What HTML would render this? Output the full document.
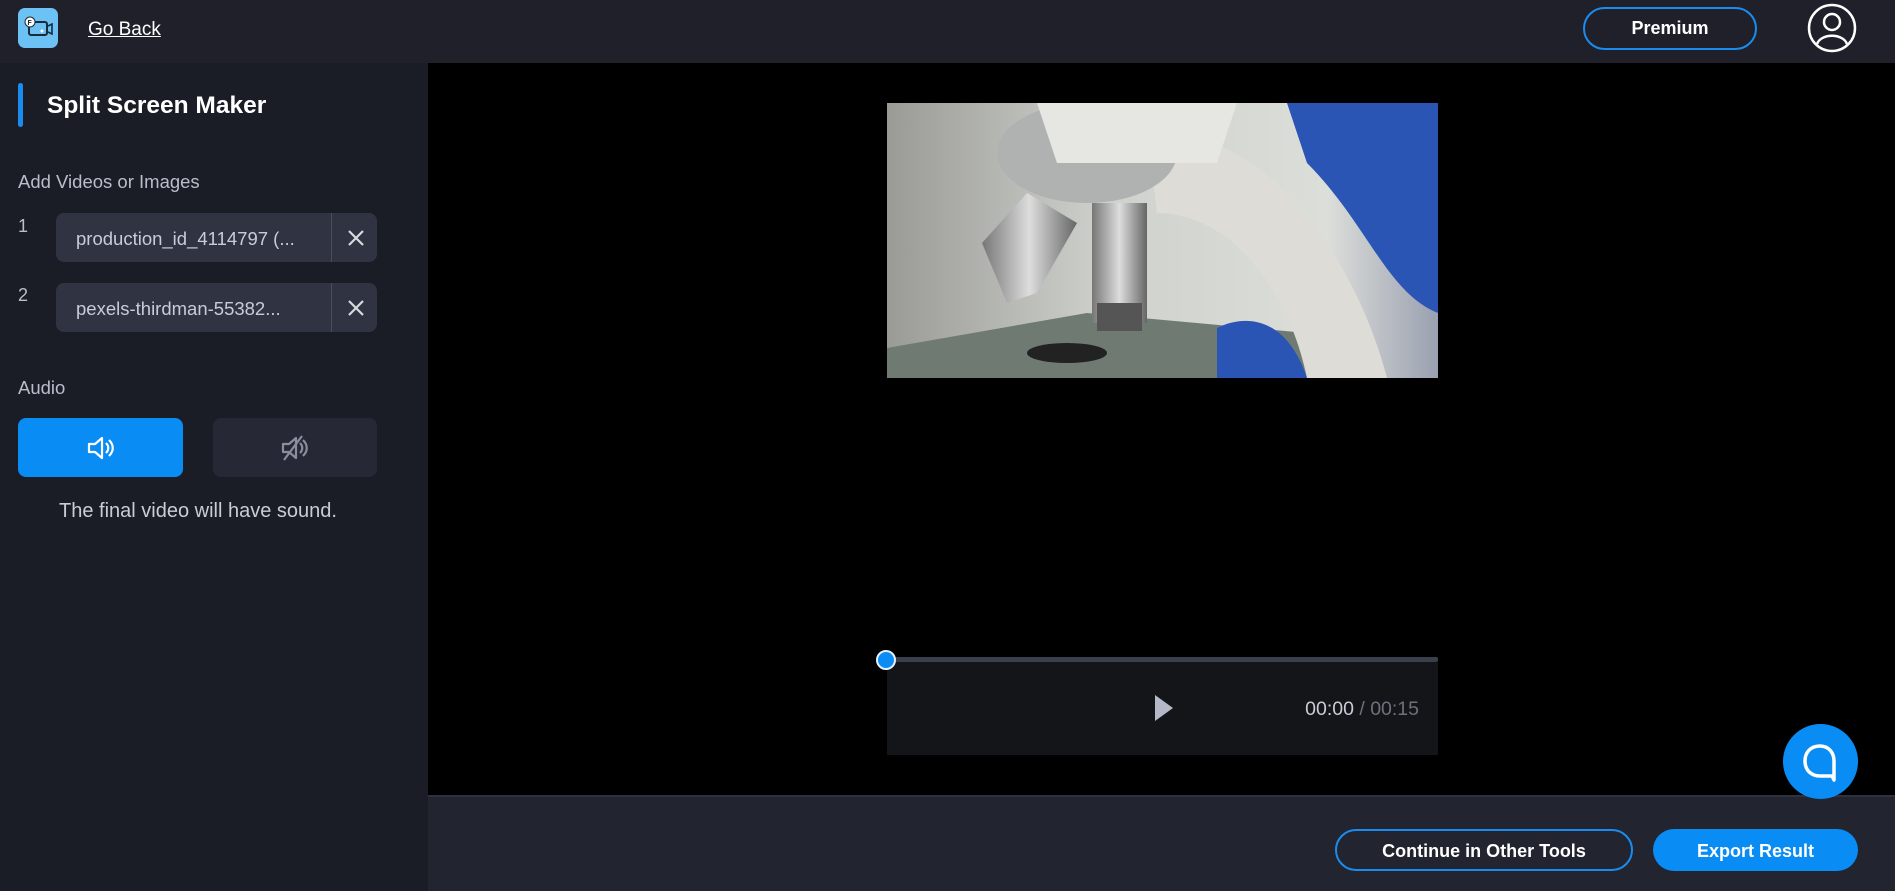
<!DOCTYPE html>
<html><head><meta charset="utf-8"><style>
*{margin:0;padding:0;box-sizing:border-box}
body{width:1895px;height:891px;overflow:hidden;background:#000;font-family:"Liberation Sans",sans-serif;position:relative}
.abs{position:absolute}
#hdr{left:0;top:0;width:1895px;height:63px;background:#1f2029}
#side{left:0;top:63px;width:428px;height:828px;background:#1b1d26}
#bot{left:428px;top:795px;width:1467px;height:96px;background:#22252f;border-top:2px solid #2e323e}
.item{background:#303341;border-radius:8px;height:49px;width:321px;left:56px}
.item span{position:absolute;left:20px;top:15px;color:#c9ccd8;font-size:18.5px}
.item i{position:absolute;left:275px;top:0;width:1px;height:49px;background:#4a4e5c}
.num{left:18px;color:#b9bdcc;font-size:18px}
</style></head><body>
<div id="hdr" class="abs"></div>
<div class="abs" style="left:18px;top:8px;width:40px;height:40px;border-radius:7px;background:#6cc2f5"></div>
<svg class="abs" style="left:18px;top:8px" width="40" height="40" viewBox="0 0 40 40"><rect x="11" y="14" width="18" height="13" rx="2" fill="none" stroke="#1b2b3a" stroke-width="2"/><path d="M30 18 L34 16 V26 L30 24" fill="none" stroke="#1b2b3a" stroke-width="1.6"/><circle cx="12" cy="14" r="5" fill="#fff" stroke="#1b2b3a" stroke-width="1"/><text x="9.5" y="17" font-size="7" font-family="Liberation Sans" font-weight="bold" fill="#1b2b3a">F</text><circle cx="24" cy="23" r="1.5" fill="#fff"/></svg>
<div class="abs" style="left:88px;top:19px;color:#fff;font-size:19px;text-decoration:underline">Go Back</div>
<div class="abs" style="left:1583px;top:7px;width:174px;height:43px;border:2px solid #1a8cf0;border-radius:22px;color:#fff;font-size:18px;text-align:center;line-height:39px;font-weight:bold">Premium</div>
<svg class="abs" style="left:1807px;top:3px" width="50" height="50" viewBox="0 0 50 50"><circle cx="25" cy="25" r="23" fill="none" stroke="#fff" stroke-width="2.5"/><circle cx="25" cy="19" r="8" fill="none" stroke="#fff" stroke-width="2.5"/><path d="M10 41 C14 30 36 30 40 41" fill="none" stroke="#fff" stroke-width="2.5"/></svg>

<div id="side" class="abs"></div>
<div class="abs" style="left:18px;top:83px;width:5px;height:44px;background:#1a8cf0;border-radius:3px"></div>
<div class="abs" style="left:47px;top:92px;color:#fff;font-size:24.5px;font-weight:bold">Split Screen Maker</div>
<div class="abs" style="left:18px;top:171px;color:#b9bdcc;font-size:18.5px">Add Videos or Images</div>
<div class="abs num" style="top:216px">1</div>
<div class="abs item" style="top:213px"><span>production_id_4114797 (...</span><i></i></div>
<div class="abs num" style="top:285px">2</div>
<div class="abs item" style="top:283px"><span>pexels-thirdman-55382...</span><i></i></div>
<svg class="abs" style="left:347px;top:229px" width="18" height="18"><path d="M2 2L16 16M16 2L2 16" stroke="#d8dae2" stroke-width="2.2"/></svg>
<svg class="abs" style="left:347px;top:299px" width="18" height="18"><path d="M2 2L16 16M16 2L2 16" stroke="#d8dae2" stroke-width="2.2"/></svg>
<div class="abs" style="left:18px;top:377px;color:#b9bdcc;font-size:18.5px">Audio</div>
<div class="abs" style="left:18px;top:418px;width:165px;height:59px;background:#0a8cf5;border-radius:8px"></div>
<svg class="abs" style="left:86px;top:433px" width="30" height="30" viewBox="0 0 30 30"><path d="M3 11H9L16 5V25L9 19H3Z" fill="none" stroke="#fff" stroke-width="2.2" stroke-linejoin="round"/><path d="M20 10C23 13 23 17 20 20M23 7C28 12 28 18 23 23" fill="none" stroke="#fff" stroke-width="2.2"/></svg>
<div class="abs" style="left:213px;top:418px;width:164px;height:59px;background:#262935;border-radius:8px"></div>
<svg class="abs" style="left:280px;top:433px" width="30" height="30" viewBox="0 0 30 30"><path d="M3 11H9L16 5V25L9 19H3Z" fill="none" stroke="#8a8e9c" stroke-width="2.2" stroke-linejoin="round"/><path d="M20 10C23 13 23 17 20 20M23 7C28 12 28 18 23 23" fill="none" stroke="#8a8e9c" stroke-width="2.2"/><path d="M4 27L22 3" stroke="#8a8e9c" stroke-width="2.2"/></svg>
<div class="abs" style="left:0px;top:500px;width:396px;text-align:center;color:#c9ccd8;font-size:20px">The final video will have sound.</div>

<svg class="abs" style="left:887px;top:103px" width="551" height="275" viewBox="0 0 551 275">
<defs><linearGradient id="bg" x1="0" y1="0" x2="1" y2="0"><stop offset="0" stop-color="#9a9b97"/><stop offset=".4" stop-color="#cfd1cd"/><stop offset=".8" stop-color="#dcdeda"/><stop offset="1" stop-color="#9aa0b0"/></linearGradient>
<linearGradient id="met" x1="0" x2="1"><stop offset="0" stop-color="#777"/><stop offset=".5" stop-color="#ddd"/><stop offset="1" stop-color="#666"/></linearGradient></defs>
<rect width="551" height="275" fill="url(#bg)"/>
<path d="M0 245 L200 210 L420 230 L440 275 L0 275Z" fill="#6f7b72"/>
<ellipse cx="180" cy="250" rx="40" ry="10" fill="#222"/>
<path d="M260 30 C380 20 470 160 500 275 L420 275 C400 180 340 110 270 110Z" fill="#dedcd6"/>
<ellipse cx="200" cy="50" rx="90" ry="50" fill="#b0b2b2"/>
<path d="M150 0 L350 0 L330 60 L170 60Z" fill="#e6e6e2"/>
<rect x="205" y="100" width="55" height="120" fill="url(#met)"/>
<rect x="210" y="200" width="45" height="28" fill="#555"/>
<path d="M95 140 L140 90 L190 120 L150 190 L120 200 Z" fill="url(#met)"/>
<path d="M400 0 L551 0 L551 210 C500 190 480 120 420 60Z" fill="#2a55b5"/>
<path d="M330 225 C360 210 400 215 420 275 L330 275Z" fill="#2a55b5"/>
</svg>

<div class="abs" style="left:887px;top:657px;width:551px;height:5px;background:#3b3f4c;border-radius:2px"></div>
<div class="abs" style="left:887px;top:662px;width:551px;height:93px;background:#141519"></div>
<div class="abs" style="left:876px;top:650px;width:20px;height:20px;border-radius:50%;background:#0a8cf5;border:2px solid #e8f0ff"></div>
<svg class="abs" style="left:1153px;top:695px" width="22" height="26"><path d="M2 0L20 13L2 26Z" fill="#b5b8c6"/></svg>
<div class="abs" style="left:1250px;top:698px;width:169px;text-align:right;font-size:19.5px;color:#c9ccd8">00:00 <span style="color:#6d717e">/ 00:15</span></div>

<div id="bot" class="abs"></div>
<div class="abs" style="left:1783px;top:724px;width:75px;height:75px;border-radius:50%;background:#0a8cf5"></div>
<svg class="abs" style="left:1798px;top:740px" width="45" height="45" viewBox="0 0 45 45"><path d="M22 6C12 6 7 13 7 21C7 30 13 36 22 36H34L36 40V21C36 13 31 6 22 6Z" fill="none" stroke="#fff" stroke-width="3.5" stroke-linejoin="round"/></svg>
<div class="abs" style="left:1335px;top:829px;width:298px;height:42px;border:2px solid #1a8cf0;border-radius:21px;color:#fff;font-size:18px;text-align:center;line-height:40px;font-weight:bold">Continue in Other Tools</div>
<div class="abs" style="left:1653px;top:829px;width:205px;height:42px;background:#0a8cf5;border-radius:21px;color:#fff;font-size:18px;text-align:center;line-height:44px;font-weight:bold">Export Result</div>
</body></html>
